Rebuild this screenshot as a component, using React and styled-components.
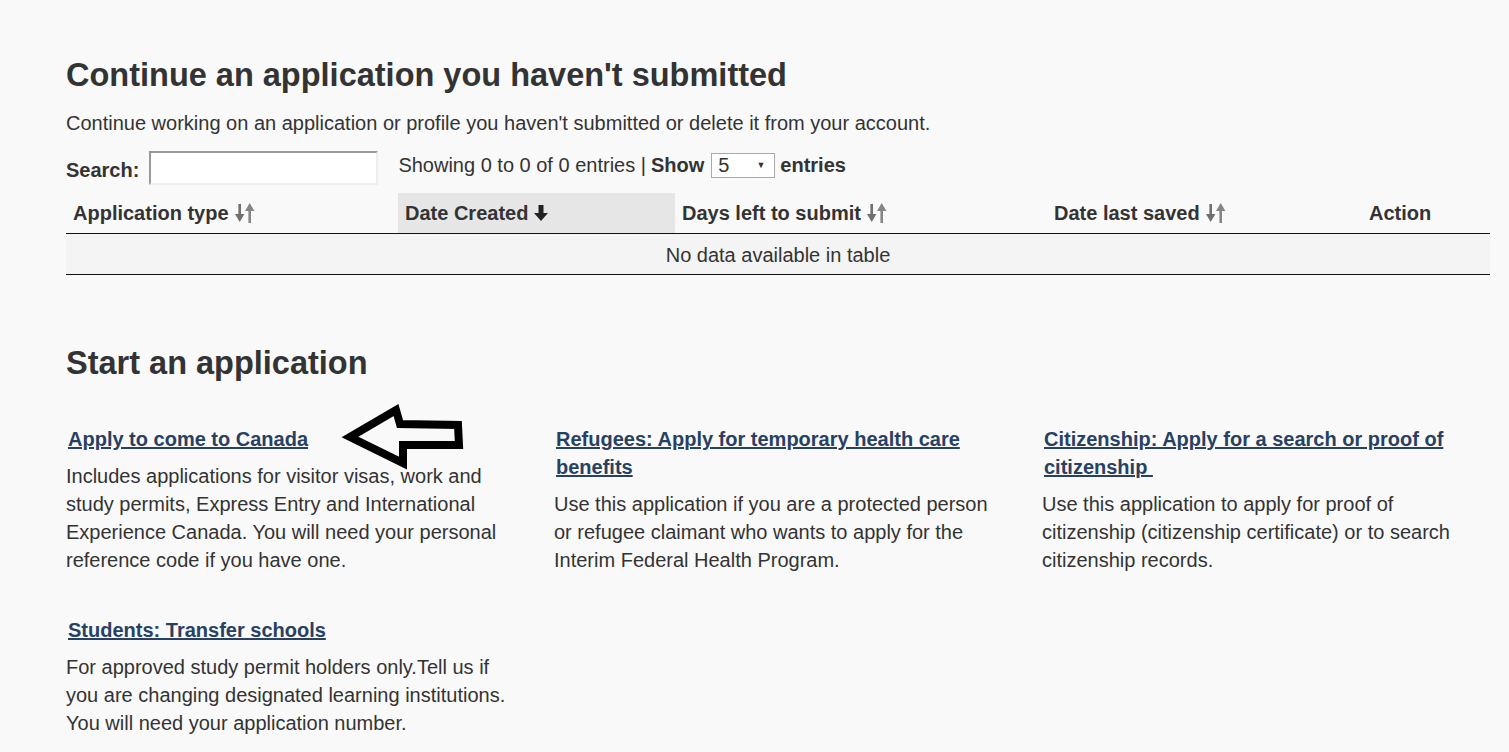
import React from "react";
import styled, { createGlobalStyle } from "styled-components";

const GlobalStyle = createGlobalStyle`
  body {
    margin: 0;
    background: #f9f9f9;
    font-family: "Liberation Sans", Arial, sans-serif;
    color: #333;
  }
`;

const Page = styled.div`
  padding: 0 19px 40px 66px;
`;

const Title = styled.h1`
  margin: 58px 0 0;
  font-size: 32.5px;
  line-height: 35px;
  font-weight: bold;
`;

const Lead = styled.p`
  margin: 16px 0 0;
  font-size: 20px;
  line-height: 28px;
`;

const Controls = styled.div`
  display: flex;
  align-items: flex-start;
  margin-top: 14px;
  font-size: 20px;
`;

const SearchLabel = styled.label`
  display: flex;
  align-items: center;
  font-weight: bold;
  margin-right: 20px;
`;

const LabelText = styled.span`
  padding-top: 4px;
`;

const SearchInput = styled.input`
  width: 229px;
  height: 34px;
  box-sizing: border-box;
  margin-left: 10px;
  background: #fff;
  border: 2px solid;
  border-color: #999 #eee #eee #999;
  font: inherit;
`;

const Info = styled.div`
  display: flex;
  align-items: center;
  line-height: 28px;
`;

const Bold = styled.b`
  margin: 0 5px;
`;

const Select = styled.div`
  width: 64px;
  height: 25px;
  box-sizing: border-box;
  margin-left: 2px;
  border: 1px solid #a9a9a9;
  background: #fff;
  display: flex;
  align-items: center;
  justify-content: space-between;
  padding: 0 9px 0 6px;
  font-size: 20px;
  line-height: 1;
  &::after {
    content: "▼";
    font-size: 9px;
    color: #333;
  }
`;

const Table = styled.table`
  width: 1424px;
  margin-top: 8px;
  border-collapse: collapse;
  table-layout: fixed;
  font-size: 20px;
`;

const Th = styled.th`
  height: 40px;
  padding: 0 7px;
  text-align: left;
  font-weight: bold;
  border-bottom: 1px solid #111;
  background: ${(p) => (p.$sorted ? "#e6e6e6" : "transparent")};
  white-space: nowrap;
`;

const HeadInner = styled.span`
  display: inline-flex;
  align-items: center;
  gap: 6px;
`;

const EmptyCell = styled.td`
  height: 41px;
  padding: 2px 0 0;
  box-sizing: border-box;
  text-align: center;
  background: #f4f4f4;
  border-bottom: 1px solid #111;
`;

const Subtitle = styled.h2`
  margin: 71px 0 0;
  font-size: 32.5px;
  line-height: 35px;
  font-weight: bold;
`;

const Cards = styled.div`
  display: grid;
  grid-template-columns: repeat(3, 445px);
  column-gap: 43px;
  row-gap: 42px;
  margin-top: 44px;
`;

const Card = styled.div`
  position: relative;
`;

const CardLink = styled.a`
  display: block;
  margin-left: 2px;
  font-size: 20px;
  line-height: 28px;
  font-weight: bold;
  color: #284162;
  text-decoration: underline;
`;

const CardText = styled.p`
  margin: 9px 0 0;
  font-size: 20px;
  line-height: 28px;
`;

const Pointer = styled.svg`
  position: absolute;
  left: 269px;
  top: -26px;
`;

const SortIcon = () => (
  <svg width="20" height="22" viewBox="0 0 20 22">
    <rect x="3.4" y="2" width="2.6" height="12" fill="#6f6f6f" />
    <polygon points="0,12 9.4,12 4.7,20" fill="#6f6f6f" />
    <rect x="13.4" y="7" width="2.6" height="14" fill="#858585" />
    <polygon points="10,9 19.4,9 14.7,1" fill="#858585" />
  </svg>
);

const SortDown = () => (
  <svg width="14" height="20" viewBox="0 0 14 20">
    <rect x="4.5" y="2" width="5" height="9" fill="#222" />
    <polygon points="0,10 14,10 7,18" fill="#222" />
  </svg>
);

const columns = [
  { label: "Application type", width: 332, icon: <SortIcon /> },
  { label: "Date Created", width: 277, icon: <SortDown />, sorted: true },
  { label: "Days left to submit", width: 372, icon: <SortIcon /> },
  { label: "Date last saved", width: 315, icon: <SortIcon /> },
  { label: "Action", width: 128 },
];

const cards = [
  {
    title: "Apply to come to Canada",
    text: "Includes applications for visitor visas, work and study permits, Express Entry and International Experience Canada. You will need your personal reference code if you have one.",
    arrow: true,
  },
  {
    title: "Refugees: Apply for temporary health care benefits",
    text: "Use this application if you are a protected person or refugee claimant who wants to apply for the Interim Federal Health Program.",
  },
  {
    title: "Citizenship: Apply for a search or proof of citizenship\u00a0",
    text: "Use this application to apply for proof of citizenship (citizenship certificate) or to search citizenship records.",
  },
  {
    title: "Students: Transfer schools",
    text: "For approved study permit holders only.Tell us if you are changing designated learning institutions. You will need your application number.",
  },
];

const App = () => {
  return (
    <>
      <GlobalStyle />
      <Page>
        <Title>Continue an application you haven't submitted</Title>
        <Lead>
          Continue working on an application or profile you haven't submitted
          or delete it from your account.
        </Lead>
        <Controls>
          <SearchLabel>
            <LabelText>Search:</LabelText>
            <SearchInput type="text" />
          </SearchLabel>
          <Info>
            Showing 0 to 0 of 0 entries |<Bold>Show</Bold>
            <Select>5</Select>
            <Bold>entries</Bold>
          </Info>
        </Controls>
        <Table>
          <colgroup>
            {columns.map((c) => (
              <col key={c.label} style={{ width: c.width }} />
            ))}
          </colgroup>
          <thead>
            <tr>
              {columns.map((c) => (
                <Th key={c.label} $sorted={c.sorted}>
                  <HeadInner>
                    {c.label}
                    {c.icon}
                  </HeadInner>
                </Th>
              ))}
            </tr>
          </thead>
          <tbody>
            <tr>
              <EmptyCell colSpan={5}>No data available in table</EmptyCell>
            </tr>
          </tbody>
        </Table>

        <Subtitle>Start an application</Subtitle>
        <Cards>
          {cards.map((c) => (
            <Card key={c.title}>
              <CardLink href="#">{c.title}</CardLink>
              <CardText>{c.text}</CardText>
              {c.arrow && (
                <Pointer width="135" height="80" viewBox="0 0 135 80">
                  <polygon
                    points="15,38 61,11 65,25 123,26 124,46 68,46 68,64"
                    fill="none"
                    stroke="#000"
                    strokeWidth="8"
                    strokeLinejoin="miter"
                  />
                </Pointer>
              )}
            </Card>
          ))}
        </Cards>
      </Page>
    </>
  );
};

export default App;
